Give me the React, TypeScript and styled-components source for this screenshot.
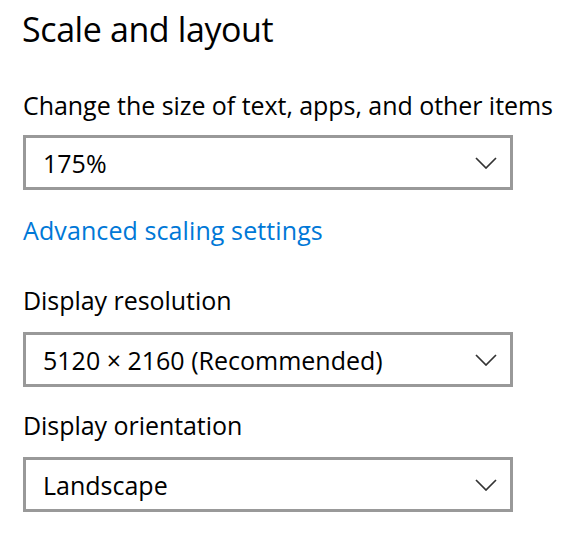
import React from 'react';
import styled, { createGlobalStyle } from 'styled-components';

const GlobalStyle = createGlobalStyle`
  html, body {
    margin: 0;
    padding: 0;
    background: #ffffff;
  }
  body {
    font-family: "Open Sans", "Noto Sans", "Liberation Sans", sans-serif;
    color: #000000;
  }
`;

const Page = styled.div`
  width: 568px;
  height: 535px;
  box-sizing: border-box;
  padding: 5px 0 0 23px;
  display: flex;
  flex-direction: column;
  overflow: hidden;
`;

const Heading = styled.h1`
  margin: 0 0 36px -1px;
  font-size: 34px;
  font-weight: 400;
  line-height: 48px;
  letter-spacing: -0.4px;
`;

const Label = styled.div<{ $gap?: number }>`
  margin-top: ${props => props.$gap ?? 0}px;
  font-size: 25px;
  line-height: 32px;
  letter-spacing: -0.05px;
`;

const Link = styled.a`
  margin-top: 24px;
  font-size: 25px;
  line-height: 32px;
  color: #0078d7;
  text-decoration: none;
  cursor: pointer;
  align-self: flex-start;
  letter-spacing: 0.1px;
`;

const Select = styled.div<{ $gap: number }>`
  margin-top: ${props => props.$gap}px;
  width: 490px;
  height: 55px;
  box-sizing: border-box;
  border: 3.5px solid #999999;
  background: #ffffff;
  display: flex;
  align-items: center;
  justify-content: space-between;
  padding: 0 13px 0 17px;
  font-size: 25px;
  line-height: 48px;
  letter-spacing: 0px;
`;

const Chevron = styled.svg`
  width: 22px;
  height: 12px;
  flex: none;
`;

const ChevronIcon: React.FC = () => (
  <Chevron viewBox="0 0 22 12">
    <polyline points="1,1 11,11 21,1" fill="none" stroke="#333333" strokeWidth="1.7" />
  </Chevron>
);

const Dropdown: React.FC<{ value: string; gap: number }> = ({ value, gap }) => (
  <Select $gap={gap}>
    <span>{value}</span>
    <ChevronIcon />
  </Select>
);

const App: React.FC = () => (
  <>
    <GlobalStyle />
    <Page>
      <Heading>Scale and layout</Heading>
      <Label>Change the size of text, apps, and other items</Label>
      <Dropdown value="175%" gap={14} />
      <Link>Advanced scaling settings</Link>
      <Label $gap={38}>Display resolution</Label>
      <Dropdown value="5120 × 2160 (Recommended)" gap={16} />
      <Label $gap={22}>Display orientation</Label>
      <Dropdown value="Landscape" gap={16} />
    </Page>
  </>
);

export default App;
